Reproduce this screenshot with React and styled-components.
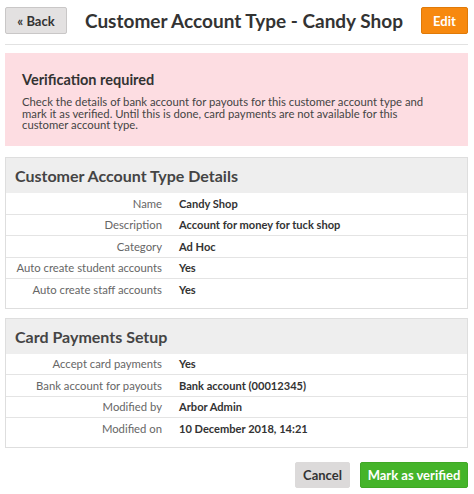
import React from "react";
import styled, { createGlobalStyle } from "styled-components";

const GlobalStyle = createGlobalStyle`
  html, body {
    margin: 0;
    padding: 0;
    background: #ffffff;
  }
  body {
    font-family: Lato, "Open Sans", sans-serif;
    color: #333333;
  }
`;

const Page = styled.div`
  width: 474px;
  padding: 7px 6px 0 5px;
  box-sizing: border-box;
`;

const Header = styled.div`
  display: flex;
  align-items: center;
  justify-content: space-between;
  padding-bottom: 10px;
  border-bottom: 1px solid #e2e2e2;
`;

const Button = styled.button`
  height: ${props => props.h || 27}px;
  width: ${props => props.w}px;
  padding: 0;
  border-radius: 2px;
  font-family: inherit;
  font-size: 13px;
  font-weight: 700;
  cursor: pointer;
  background: ${props => props.bg};
  color: ${props => props.color};
  border: 1px solid ${props => props.border};
`;

const Title = styled.h1`
  margin: 0;
  flex: 1;
  text-align: center;
  white-space: nowrap;
  font-size: 19px;
  font-weight: 700;
  color: #333333;
`;

const Alert = styled.div`
  margin-top: 8px;
  background: #fddde2;
  padding: 18px 36px 15px 17px;
`;

const AlertTitle = styled.div`
  font-size: 14.5px;
  line-height: 18px;
  font-weight: 700;
  color: #333333;
  margin-bottom: 7px;
`;

const AlertText = styled.p`
  margin: 0;
  font-size: 11.3px;
  line-height: 11.7px;
  color: #444444;
`;

const Panel = styled.section`
  margin-top: ${props => props.top}px;
  border: 1px solid #dedede;
  padding-bottom: 8px;
`;

const PanelHeader = styled.h2`
  margin: 0;
  height: 35px;
  display: flex;
  align-items: center;
  padding: 0 9px;
  background: #eeeeee;
  font-size: 16px;
  font-weight: 700;
  color: #444444;
`;

const Row = styled.div`
  display: grid;
  grid-template-columns: 156px 1fr;
  column-gap: 17px;
  align-items: center;
  height: 20.5px;
  font-size: 11.3px;
  & + & {
    border-top: 1px solid #e4e4e4;
  }
`;

const Label = styled.div`
  text-align: right;
  color: #666666;
`;

const Value = styled.div`
  font-weight: 700;
  font-size: 11.1px;
  color: #333333;
`;

const Actions = styled.div`
  display: flex;
  justify-content: flex-end;
  gap: 10px;
  margin-top: 14px;
`;

const details = [
  ["Name", "Candy Shop"],
  ["Description", "Account for money for tuck shop"],
  ["Category", "Ad Hoc"],
  ["Auto create student accounts", "Yes"],
  ["Auto create staff accounts", "Yes"],
];

const payments = [
  ["Accept card payments", "Yes"],
  ["Bank account for payouts", "Bank account (00012345)"],
  ["Modified by", "Arbor Admin"],
  ["Modified on", "10 December 2018, 14:21"],
];

const InfoPanel = ({ title, rows, top }) => (
  <Panel top={top}>
    <PanelHeader>{title}</PanelHeader>
    {rows.map(([label, value]) => (
      <Row key={label}>
        <Label>{label}</Label>
        <Value>{value}</Value>
      </Row>
    ))}
  </Panel>
);

export default function App() {
  return (
    <>
      <GlobalStyle />
      <Page>
        <Header>
          <Button w={62} bg="#e3e1e1" color="#333" border="#c9c7c7">« Back</Button>
          <Title>Customer Account Type - Candy Shop</Title>
          <Button w={47} bg="#f7890f" color="#fff" border="#e07a08">Edit</Button>
        </Header>
        <Alert>
          <AlertTitle>Verification required</AlertTitle>
          <AlertText>
            Check the details of bank account for payouts for this customer account type and
            mark it as verified. Until this is done, card payments are not available for this
            customer account type.
          </AlertText>
        </Alert>
        <InfoPanel title="Customer Account Type Details" rows={details} top={11} />
        <InfoPanel title="Card Payments Setup" rows={payments} top={9} />
        <Actions>
          <Button w={55} h={26} bg="#dcdada" color="#333" border="#dcdada">Cancel</Button>
          <Button w={108} h={26} bg="#45b42a" color="#fff" border="#3fa825">Mark as verified</Button>
        </Actions>
      </Page>
    </>
  );
}
